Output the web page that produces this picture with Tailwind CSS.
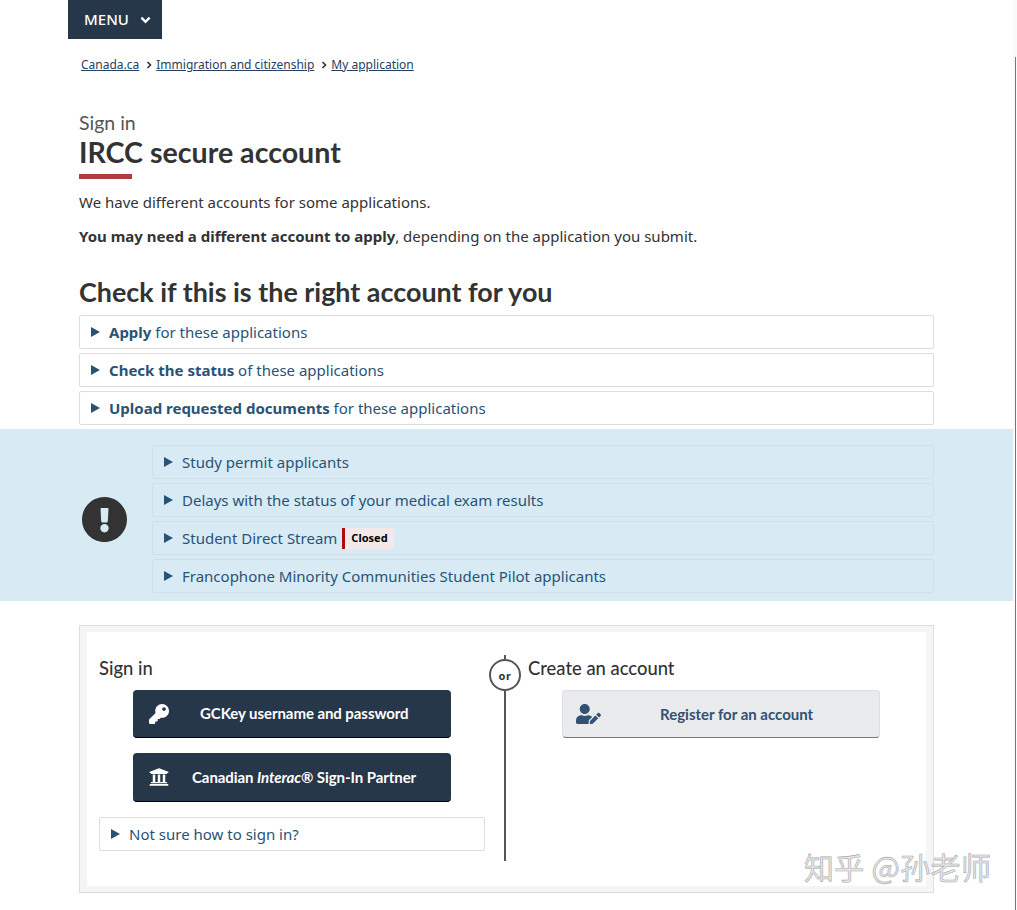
<!doctype html>
<html lang="en">
<head>
    <meta charset="UTF-8">
    <meta name="viewport" content="width=device-width, initial-scale=1.0">
    <title>IRCC secure account</title>
    <script src="https://cdn.jsdelivr.net/npm/@tailwindcss/browser@4"></script>
</head>
<body class="relative h-[910px] overflow-hidden bg-white font-['Noto_Sans',sans-serif] text-[#333]">
<!-- scrollbar sliver on the right edge -->
<div class="absolute right-0 top-0 h-full w-[4px] bg-[#fafafa]"></div>
<div class="absolute right-[1px] top-[57px] bottom-0 w-[1px] bg-[#777]"></div>

<div class="w-[1013px]">
    <header class="pl-[68px]">
        <button class="flex h-[39px] w-[94px] items-center gap-[11px] bg-[#26374a] pl-4 text-[15px] font-medium text-white">
            MENU
            <svg class="h-[10px] w-[11px]" viewBox="0 0 12 10"><path d="M1.5 2.5 6 7l4.5-4.5" fill="none" stroke="white" stroke-width="2.6"/></svg>
        </button>
    </header>

    <nav class="mt-[18px] flex h-[16px] items-center pl-[81px] text-[12px] leading-4 text-[#284162]">
        <a class="underline" href="#">Canada.ca</a>
        <svg class="ml-[7px] mr-[4px] h-[8px] w-[6px]" viewBox="0 0 6 8"><path d="M1.5 1 4.5 4l-3 3" fill="none" stroke="#333" stroke-width="1.6"/></svg>
        <a class="underline" href="#">Immigration and citizenship</a>
        <svg class="ml-[7px] mr-[4px] h-[8px] w-[6px]" viewBox="0 0 6 8"><path d="M1.5 1 4.5 4l-3 3" fill="none" stroke="#333" stroke-width="1.6"/></svg>
        <a class="underline" href="#">My application</a>
    </nav>

    <main class="mt-[38px] px-[79px]">
        <div class="w-[855px]">
            <p class="font-['Lato',sans-serif] text-[19.5px] leading-[23px] text-[#555]">Sign in</p>
            <h1 class="font-['Lato',sans-serif] text-[28.6px] font-bold leading-[36px] text-[#333]">IRCC secure account</h1>
            <div class="mt-[4px] h-[5px] w-[53px] bg-[#af3c43]"></div>

            <p class="mt-[13px] text-[15px] leading-[20px]">We have different accounts for some applications.</p>
            <p class="mt-[14px] text-[15px] leading-[20px]"><b>You may need a different account to apply</b>, depending on the application you submit.</p>

            <h2 class="mt-[29px] font-['Lato',sans-serif] text-[26.9px] font-bold leading-[34px] text-[#333]">Check if this is the right account for you</h2>

            <div class="mt-[6px] flex flex-col gap-[4px]">
                <details class="h-[34px] rounded-[2px] border border-[#ddd] bg-white">
                    <summary class="flex h-[32px] list-none items-center gap-[9px] pl-[11px] text-[15px] text-[#295376]">
                        <svg class="h-[10px] w-[9px]" viewBox="0 0 9 10"><path d="M0 0 9 5 0 10z" fill="#295376"/></svg>
                        <span><b>Apply</b> for these applications</span>
                    </summary>
                </details>
                <details class="h-[34px] rounded-[2px] border border-[#ddd] bg-white">
                    <summary class="flex h-[32px] list-none items-center gap-[9px] pl-[11px] text-[15px] text-[#295376]">
                        <svg class="h-[10px] w-[9px]" viewBox="0 0 9 10"><path d="M0 0 9 5 0 10z" fill="#295376"/></svg>
                        <span><b>Check the status</b> of these applications</span>
                    </summary>
                </details>
                <details class="h-[34px] rounded-[2px] border border-[#ddd] bg-white">
                    <summary class="flex h-[32px] list-none items-center gap-[9px] pl-[11px] text-[15px] text-[#295376]">
                        <svg class="h-[10px] w-[9px]" viewBox="0 0 9 10"><path d="M0 0 9 5 0 10z" fill="#295376"/></svg>
                        <span><b>Upload requested documents</b> for these applications</span>
                    </summary>
                </details>
            </div>
        </div>
    </main>

    <section class="mt-[4px] flex h-[172px] items-center bg-[#d8ebf5] pb-[8px] pl-[82px] pt-[16px]">
        <svg class="h-[45px] w-[45px] shrink-0" viewBox="8 8 496 496"><path fill="#333" d="M504 256c0 136.997-111.043 248-248 248S8 392.997 8 256C8 119.083 119.043 8 256 8s248 111.083 248 248zm-248 50c-25.405 0-46 20.595-46 46s20.595 46 46 46 46-20.595 46-46-20.595-46-46-46zm-43.673-165.346l7.418 136c.347 6.364 5.609 11.346 11.982 11.346h48.546c6.373 0 11.635-4.982 11.982-11.346l7.418-136c.375-6.874-5.098-12.654-11.982-12.654h-63.383c-6.884 0-12.356 5.78-11.981 12.654z"/></svg>
        <div class="ml-[25px] flex w-[782px] flex-col gap-[4px]">
            <details class="h-[34px] rounded-[2px] border border-[#cfe0ea]">
                <summary class="flex h-[32px] list-none items-center gap-[9px] pl-[11px] text-[15px] text-[#295376]">
                    <svg class="h-[10px] w-[9px]" viewBox="0 0 9 10"><path d="M0 0 9 5 0 10z" fill="#295376"/></svg>
                    <span>Study permit applicants</span>
                </summary>
            </details>
            <details class="h-[34px] rounded-[2px] border border-[#cfe0ea]">
                <summary class="flex h-[32px] list-none items-center gap-[9px] pl-[11px] text-[15px] text-[#295376]">
                    <svg class="h-[10px] w-[9px]" viewBox="0 0 9 10"><path d="M0 0 9 5 0 10z" fill="#295376"/></svg>
                    <span>Delays with the status of your medical exam results</span>
                </summary>
            </details>
            <details class="h-[34px] rounded-[2px] border border-[#cfe0ea]">
                <summary class="flex h-[32px] list-none items-center gap-[9px] pl-[11px] text-[15px] text-[#295376]">
                    <svg class="h-[10px] w-[9px]" viewBox="0 0 9 10"><path d="M0 0 9 5 0 10z" fill="#295376"/></svg>
                    <span>Student Direct Stream</span>
                    <span class="-ml-[4px] flex h-[21px] items-center rounded-r-[3px] border-l-[3px] border-[#af0c0c] bg-[#f3e9e8] px-[6px] text-[11px] font-bold text-black">Closed</span>
                </summary>
            </details>
            <details class="h-[34px] rounded-[2px] border border-[#cfe0ea]">
                <summary class="flex h-[32px] list-none items-center gap-[9px] pl-[11px] text-[15px] text-[#295376]">
                    <svg class="h-[10px] w-[9px]" viewBox="0 0 9 10"><path d="M0 0 9 5 0 10z" fill="#295376"/></svg>
                    <span>Francophone Minority Communities Student Pilot applicants</span>
                </summary>
            </details>
        </div>
    </section>

    <section class="ml-[79px] mt-[24px] h-[268px] w-[855px] border border-[#ddd] bg-[#f5f5f5] p-[6px] pl-[7px] pr-[7px]">
        <div class="flex h-full bg-white pl-[12px]">
            <div class="w-[386px] pt-[24px]">
                <h3 class="font-['Lato',sans-serif] text-[18.4px] font-medium leading-[24px] text-[#333]">Sign in</h3>
                <a href="#" class="ml-[34px] mt-[10px] flex h-[48px] w-[318px] items-center rounded-[4px] border-b border-black bg-[#26374a] font-['Lato',sans-serif] text-[15px] font-bold tracking-[-0.07px] text-white">
                    <svg class="ml-[16px] h-[20px] w-[20px] shrink-0" viewBox="0 0 512 512"><path fill="white" d="M512 176.001C512 273.203 433.202 352 336 352c-11.22 0-22.19-1.062-32.827-3.069l-24.012 27.014A23.999 23.999 0 0 1 261.223 384H224v40c0 13.255-10.745 24-24 24h-40v40c0 13.255-10.745 24-24 24H24c-13.255 0-24-10.745-24-24v-78.059c0-6.365 2.529-12.47 7.029-16.971l161.802-161.802C163.108 213.814 160 195.271 160 176 160 78.798 238.797.001 335.999 0 433.488-.001 512 78.511 512 176.001zM336 128c0 26.51 21.49 48 48 48s48-21.49 48-48-21.49-48-48-48-48 21.49-48 48z"/></svg>
                    <span class="ml-[31px]">GCKey username and password</span>
                </a>
                <a href="#" class="ml-[34px] mt-[15px] flex h-[49px] w-[318px] items-center rounded-[4px] border-b border-black bg-[#26374a] font-['Lato',sans-serif] text-[15px] font-bold tracking-[-0.07px] text-white">
                    <svg class="ml-[16px] h-[20px] w-[20px] shrink-0" viewBox="0 0 512 512"><path fill="white" d="M496 128v16a8 8 0 0 1-8 8h-24v12c0 6.627-5.373 12-12 12H60c-6.627 0-12-5.373-12-12v-12H24a8 8 0 0 1-8-8v-16a8 8 0 0 1 4.941-7.392l232-88a7.996 7.996 0 0 1 6.118 0l232 88A8 8 0 0 1 496 128zm-24 304H40c-13.255 0-24 10.745-24 24v16a8 8 0 0 0 8 8h464a8 8 0 0 0 8-8v-16c0-13.255-10.745-24-24-24zM96 192v192H60c-6.627 0-12 5.373-12 12v20h416v-20c0-6.627-5.373-12-12-12h-36V192h-64v192h-64V192h-64v192h-64V192H96z"/></svg>
                    <span class="ml-[23px]">Canadian <i>Interac</i>® Sign-In Partner</span>
                </a>
                <details class="mt-[15px] h-[34px] rounded-[2px] border border-[#ddd] bg-white">
                    <summary class="flex h-[32px] list-none items-center gap-[9px] pl-[11px] text-[15px] text-[#295376]">
                        <svg class="h-[10px] w-[9px]" viewBox="0 0 9 10"><path d="M0 0 9 5 0 10z" fill="#295376"/></svg>
                        <span>Not sure how to sign in?</span>
                    </summary>
                </details>
            </div>

            <div class="ml-[4px] flex w-[32px] shrink-0 flex-col items-center pt-[23px]">
                <div class="h-[4px] w-[2px] bg-[#555]"></div>
                <div class="flex h-[32px] w-[32px] items-center justify-center rounded-full border-2 border-[#555] bg-white text-[11px] font-bold leading-none tracking-[0.5px]">or</div>
                <div class="mb-[25px] w-[2px] flex-1 bg-[#555]"></div>
            </div>

            <div class="ml-[7px] pt-[24px]">
                <h3 class="font-['Lato',sans-serif] text-[18.4px] font-medium leading-[24px] text-[#333]">Create an account</h3>
                <a href="#" class="ml-[34px] mt-[10px] flex h-[48px] w-[318px] items-center rounded-[4px] border border-[#dcdee1] border-b-[#777] bg-[#eaebed] font-['Lato',sans-serif] text-[15px] font-bold text-[#335075]">
                    <svg class="ml-[13px] h-[20px] w-[25px] shrink-0" viewBox="0 0 640 512"><path fill="#335075" d="M224 256c70.7 0 128-57.3 128-128S294.7 0 224 0 96 57.3 96 128s57.3 128 128 128zm89.6 32h-16.7c-22.2 10.2-46.9 16-72.9 16s-50.6-5.8-72.9-16h-16.7C60.2 288 0 348.2 0 422.4V464c0 26.5 21.5 48 48 48h274.9c-2.4-6.8-3.4-14-2.6-21.3l6.8-60.9 1.2-11.1 7.9-7.9 77.3-77.3c-24.5-27.7-60-45.5-99.9-45.5zm45.3 145.3l-6.8 61c-1.1 10.2 7.5 18.8 17.6 17.6l60.9-6.8 137.9-137.9-71.7-71.7-137.9 137.8zM633 268.9L595.1 231c-9.3-9.3-24.5-9.3-33.8 0l-37.8 37.8-4.1 4.1 71.8 71.7 41.8-41.8c9.3-9.4 9.3-24.5 0-33.9z"/></svg>
                    <span class="ml-[59px]">Register for an account</span>
                </a>
            </div>
        </div>
    </section>
</div>

<!-- watermark over the page -->
<div class="absolute left-[804px] top-[845px] whitespace-nowrap font-['Noto_Sans_CJK_SC',sans-serif] text-[30px] leading-[42px] tracking-[0.3px] text-[#e6e6e6] [-webkit-text-stroke:0.6px_#aaaaaa]">知乎 @孙老师</div>
</body>
</html>
